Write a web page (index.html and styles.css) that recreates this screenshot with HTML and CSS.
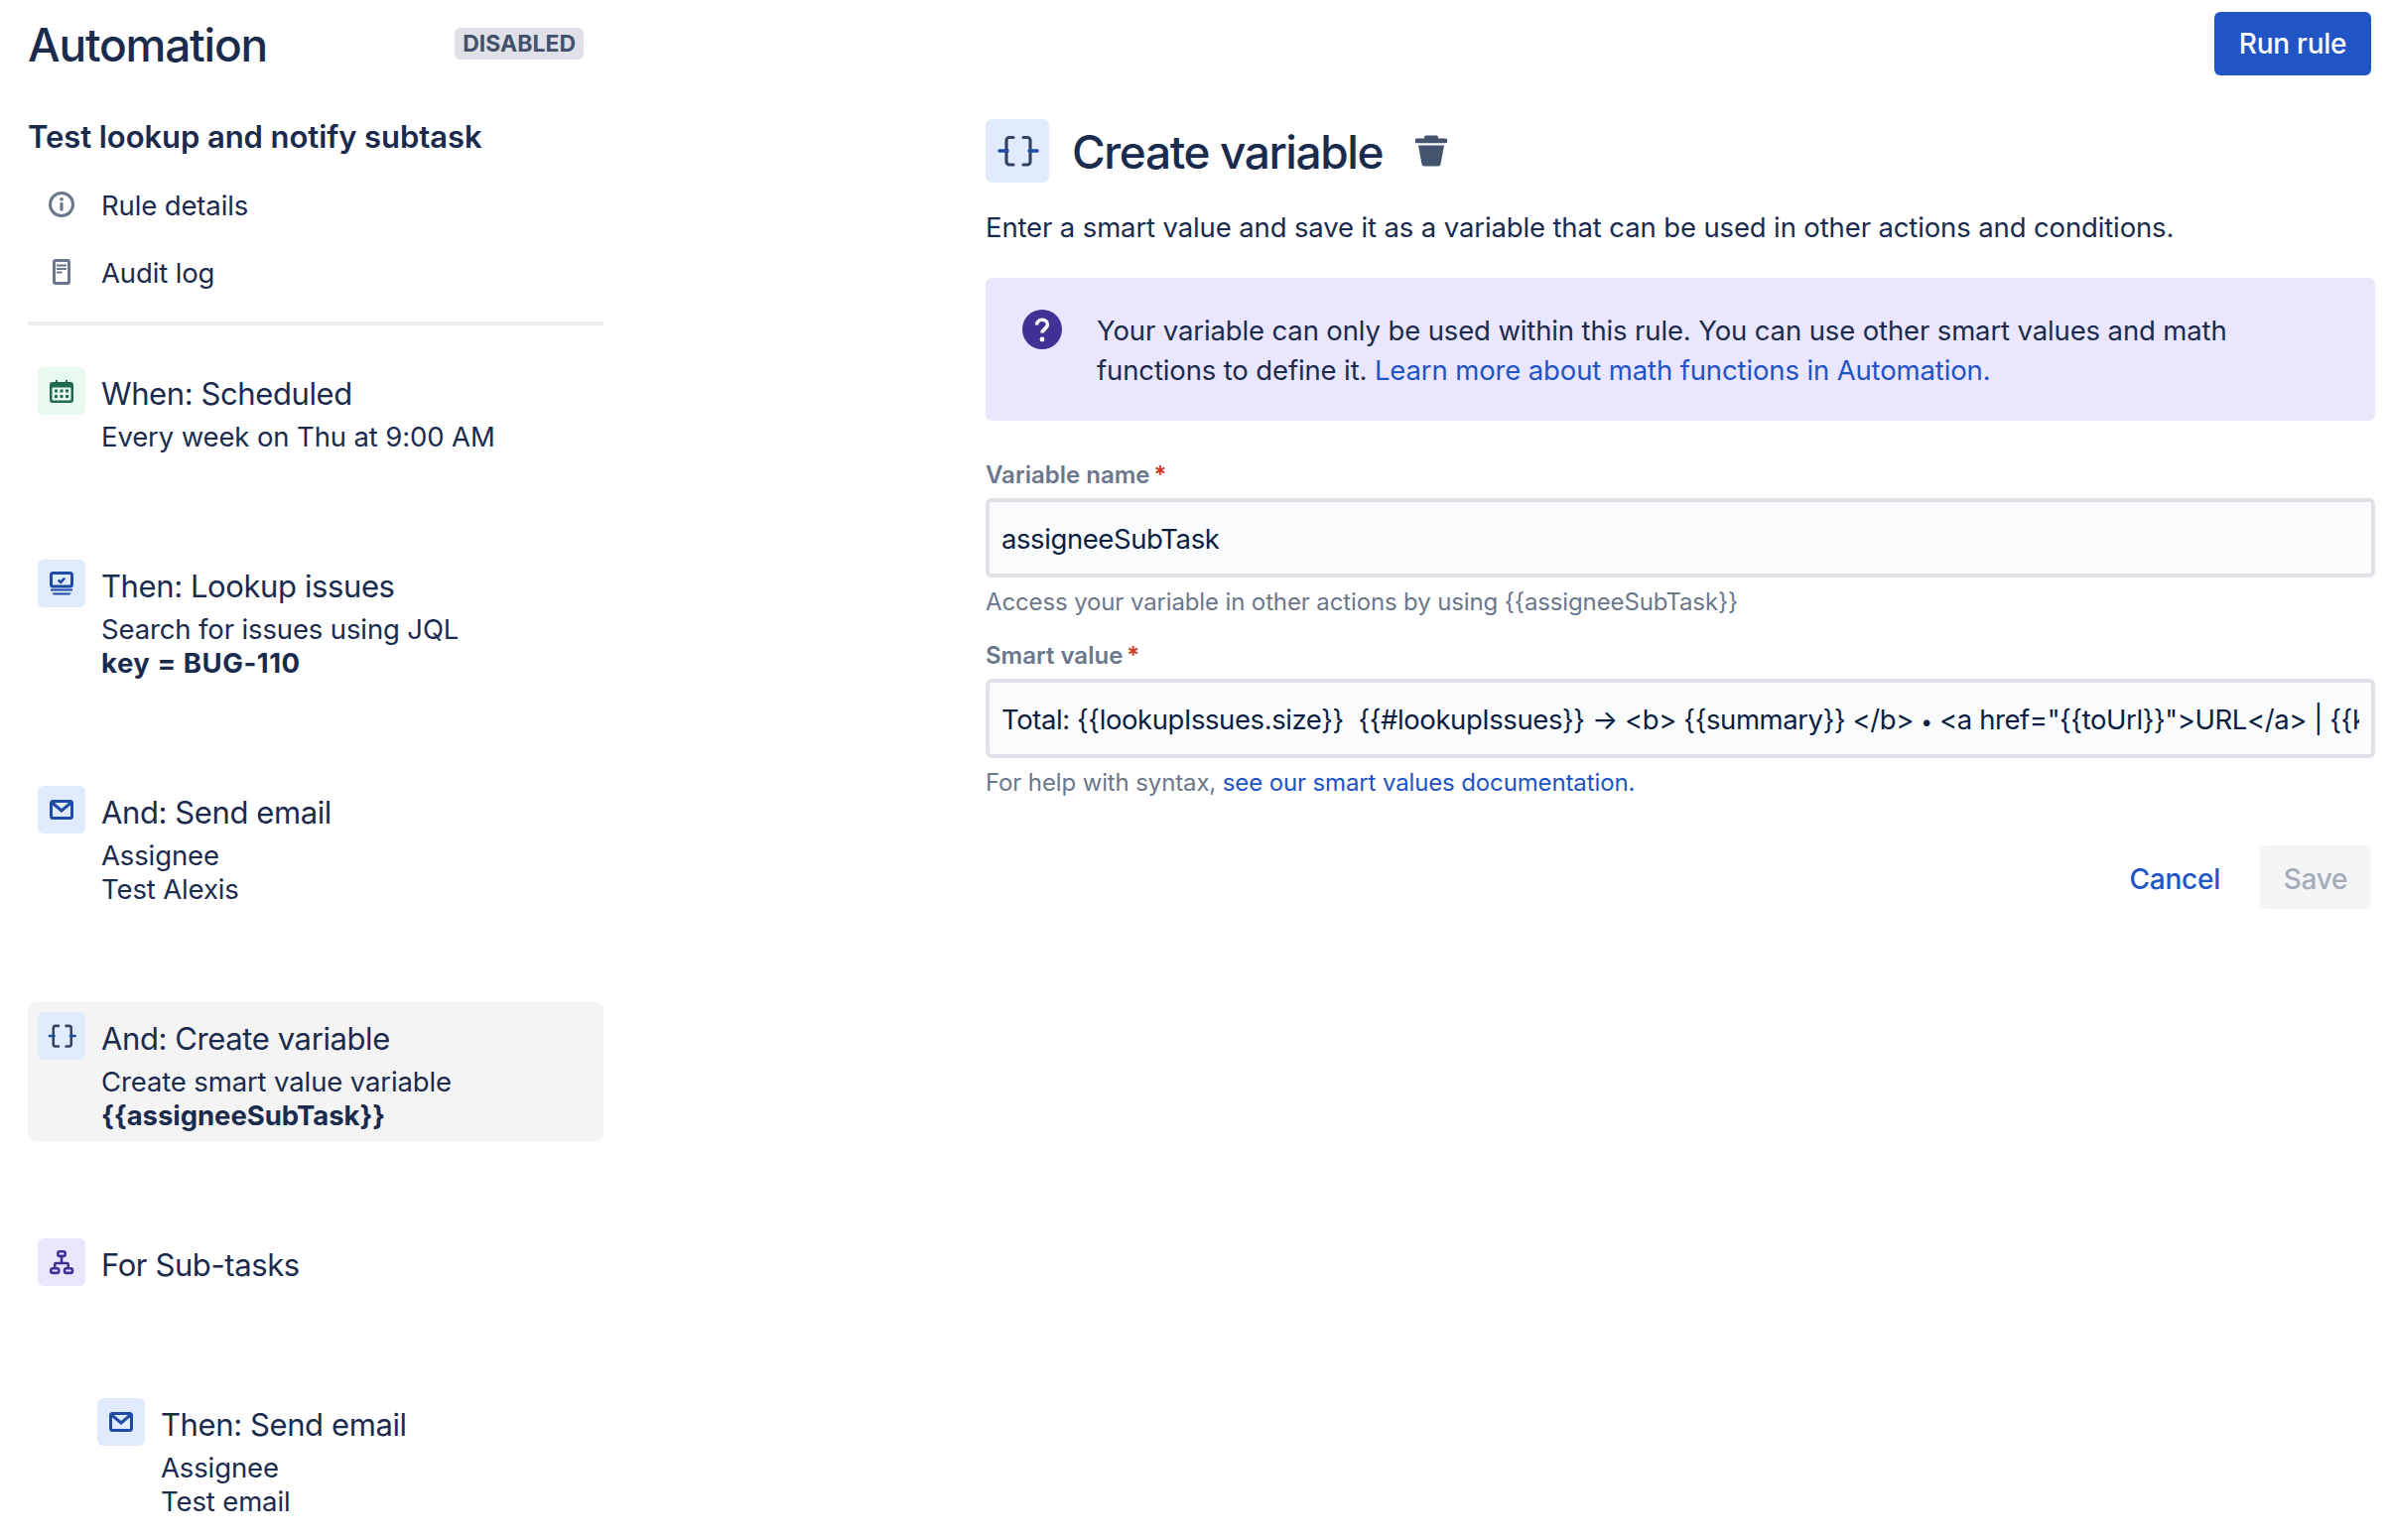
FILE: index.html
```html
<!DOCTYPE html>
<html lang="en">
<head>
<meta charset="utf-8">
<title>Automation</title>
<link rel="stylesheet" href="styles.css">
</head>
<body>
<div class="page">
  <aside class="rail">
    <header class="rail-head">
      <h1 class="app-title">Automation</h1>
      <span class="badge">DISABLED</span>
    </header>
    <h2 class="rule-name">Test lookup and notify subtask</h2>
    <nav class="rail-nav">
      <a class="nav-item">
        <span class="nav-icon"><svg width="28" height="28" viewBox="0 0 28 28"><circle cx="14" cy="14" r="11.5" fill="none" stroke="#6B778C" stroke-width="3"/><rect x="12.4" y="12" width="3.2" height="8.5" rx="1" fill="#6B778C"/><circle cx="14" cy="8.8" r="1.9" fill="#6B778C"/></svg></span>
        <span>Rule details</span>
      </a>
      <a class="nav-item">
        <span class="nav-icon"><svg width="28" height="28" viewBox="0 0 28 28"><rect x="6.5" y="2.5" width="15" height="23" rx="1.5" fill="none" stroke="#6B778C" stroke-width="3"/><path d="M9 6.5h10v2H9zM9 10h10v2H9zM9 13.5h5.5v2H9z" fill="#6B778C"/></svg></span>
        <span>Audit log</span>
      </a>
    </nav>
    <hr class="divider">
    <ol class="steps">
      <li class="step">
        <span class="tile tile-green"><svg class="ico" viewBox="0 0 48 48"><path d="M15 15h3v-2h2v2h8v-2h2v2h3a3 3 0 0 1 3 3v15a3 3 0 0 1-3 3H15a3 3 0 0 1-3-3V18a3 3 0 0 1 3-3z" fill="#216A4B"/><rect x="14.5" y="20.5" width="19" height="13" rx="1" fill="#E8FAF0"/><g fill="#216A4B"><rect x="17" y="22.5" width="3" height="3"/><rect x="22.5" y="22.5" width="3" height="3"/><rect x="28" y="22.5" width="3" height="3"/><rect x="17" y="28" width="3" height="3"/><rect x="22.5" y="28" width="3" height="3"/><rect x="28" y="28" width="3" height="3"/></g></svg></span>
        <div class="step-body">
          <div class="step-title">When: Scheduled</div>
          <div class="step-sub">Every week on Thu at 9:00 AM</div>
        </div>
      </li>
      <li class="step">
        <span class="tile tile-blue"><svg class="ico" viewBox="0 0 48 48"><rect x="13.5" y="13.5" width="21" height="13.5" rx="2" fill="none" stroke="#1D4BA6" stroke-width="3"/><path d="M20.8 20.5l2.4 2.4 4-4.4" fill="none" stroke="#1D4BA6" stroke-width="2.5"/><path d="M13 29.5h22v2H13z" fill="#1D4BA6"/><path d="M14.5 33.5h19l-1 1.6a1.5 1.5 0 0 1-1 .4h-15a1.5 1.5 0 0 1-1-.4z" fill="#1D4BA6"/></svg></span>
        <div class="step-body">
          <div class="step-title">Then: Lookup issues</div>
          <div class="step-sub">Search for issues using JQL<br><b class="key">key = BUG-110</b></div>
        </div>
      </li>
      <li class="step">
        <span class="tile tile-blue"><svg class="ico" viewBox="0 0 48 48"><rect x="13.5" y="15.5" width="21" height="17" rx="2" fill="none" stroke="#1D4BA6" stroke-width="3"/><path d="M14.5 17l9.5 8 9.5-8" fill="none" stroke="#1D4BA6" stroke-width="3"/></svg></span>
        <div class="step-body">
          <div class="step-title">And: Send email</div>
          <div class="step-sub">Assignee<br>Test Alexis</div>
        </div>
      </li>
      <li class="step step-active">
        <span class="tile tile-blue"><svg class="ico" viewBox="0 0 64 64"><path d="M28 18.5h-4a3 3 0 0 0-3 3V43a3 3 0 0 0 3 3h4M38 18.5h4a3 3 0 0 1 3 3V43a3 3 0 0 1-3 3h-4" fill="none" stroke="#344563" stroke-width="3.4" stroke-linecap="round"/><path d="M16 32h6M44 32h6" fill="none" stroke="#1D4BA6" stroke-width="3.6" stroke-linecap="round"/></svg></span>
        <div class="step-body">
          <div class="step-title">And: Create variable</div>
          <div class="step-sub">Create smart value variable<br><b>{{assigneeSubTask}}</b></div>
        </div>
      </li>
      <li class="step">
        <span class="tile tile-purple"><svg class="ico" viewBox="0 0 48 48"><g fill="none" stroke="#403294" stroke-width="2.6"><rect x="20.3" y="13.3" width="7.4" height="4.6" rx="2"/><rect x="13.3" y="30.3" width="8" height="4.6" rx="2"/><rect x="27" y="30.3" width="8" height="4.6" rx="2"/><path d="M24 18v7M17.3 30v-4a1 1 0 0 1 1-1h11.4a1 1 0 0 1 1 1v4"/></g></svg></span>
        <div class="step-body">
          <div class="step-title">For Sub-tasks</div>
        </div>
      </li>
      <li class="step step-nested">
        <span class="tile tile-blue"><svg class="ico" viewBox="0 0 48 48"><rect x="13.5" y="15.5" width="21" height="17" rx="2" fill="none" stroke="#1D4BA6" stroke-width="3"/><path d="M14.5 17l9.5 8 9.5-8" fill="none" stroke="#1D4BA6" stroke-width="3"/></svg></span>
        <div class="step-body">
          <div class="step-title">Then: Send email</div>
          <div class="step-sub">Assignee<br>Test email</div>
        </div>
      </li>
    </ol>
  </aside>

  <main class="detail">
    <div class="topbar"><button class="btn btn-primary">Run rule</button></div>
    <div class="detail-head">
      <span class="tile tile-large tile-blue"><svg class="ico" viewBox="0 0 64 64"><path d="M28 18.5h-4a3 3 0 0 0-3 3V43a3 3 0 0 0 3 3h4M38 18.5h4a3 3 0 0 1 3 3V43a3 3 0 0 1-3 3h-4" fill="none" stroke="#344563" stroke-width="3.2" stroke-linecap="round"/><path d="M14 32h8M44 32h8" fill="none" stroke="#1D4BA6" stroke-width="3.4" stroke-linecap="round"/></svg></span>
      <h2 class="detail-title">Create variable</h2>
      <svg class="trash" width="32" height="32" viewBox="0 0 32 32"><path d="M11 0.5h10a2 2 0 0 1 2 2V3.4h7.2a1.8 1.8 0 0 1 0 4.8H1.8a1.8 1.8 0 0 1 0-4.8H9V2.5a2 2 0 0 1 2-2z" fill="#44546F"/><path d="M3 10.6h26L25.6 29a3 3 0 0 1-3 2.6H9.4a3 3 0 0 1-3-2.6z" fill="#44546F"/></svg>
    </div>
    <p class="lede">Enter a smart value and save it as a variable that can be used in other actions and conditions.</p>
    <section class="notice">
      <svg class="notice-icon" width="40" height="40" viewBox="0 0 40 40"><circle cx="20" cy="20" r="20" fill="#403294"/><path d="M14.6 15.6c0-3.2 2.4-5.4 5.4-5.4s5.4 2.1 5.4 5c0 4.2-5.4 4.4-5.4 8.4" fill="none" stroke="#fff" stroke-width="3.6"/><circle cx="20" cy="30" r="2.4" fill="#fff"/></svg>
      <p class="notice-text">Your variable can only be used within this rule. You can use other smart values and math<br>functions to define it. <a class="link">Learn more about math functions in Automation.</a></p>
    </section>
    <form class="form">
      <div class="field">
        <div class="label">Variable name<span class="req">*</span></div>
        <div class="input"><div class="input-text">assigneeSubTask</div></div>
        <div class="help">Access your variable in other actions by using {{assigneeSubTask}}</div>
      </div>
      <div class="field">
        <div class="label">Smart value<span class="req">*</span></div>
        <div class="input"><div class="input-text">Total: {{lookupIssues.size}}  {{#lookupIssues}} → &lt;b&gt; {{summary}} &lt;/b&gt; <span class="dot">•</span> &lt;a href="{{toUrl}}"&gt;URL&lt;/a&gt; | {{key}} {{/lookupIssues}}</div></div>
        <div class="help">For help with syntax, <a class="link">see our smart values documentation.</a></div>
      </div>
      <div class="actions">
        <button type="button" class="btn btn-link">Cancel</button>
        <button type="button" class="btn btn-disabled">Save</button>
      </div>
    </form>
  </main>
</div>
</body>
</html>
```
FILE: styles.css
```css
* { box-sizing: border-box; }
html, body { margin: 0; padding: 0; height: 100%; background: #fff; overflow: hidden; }
body { font-family: Inter, "Liberation Sans", sans-serif; color: #1b2b4e; font-size: 27.5px; letter-spacing: -0.13px; line-height: 40px; }
.page { display: flex; width: 2408px; height: 1552px; overflow: hidden; }

.rail { width: 580px; margin-left: 28px; flex: none; padding-top: 12px; }
.rail-head { display: flex; align-items: center; justify-content: space-between; height: 64px; padding-right: 20px; }
.app-title { margin: 0; padding-top: 2px; font-size: 46px; line-height: 62px; font-weight: 500; letter-spacing: -1.2px; }
.badge { height: 32px; padding: 0 8px; background: #DFE1E6; border-radius: 6px; color: #42526E; font-size: 23px; line-height: 32px; font-weight: 700; letter-spacing: 0; }
.rule-name { margin: 41.5px 0 14.5px; font-size: 31px; line-height: 40px; font-weight: 600; letter-spacing: -0.07px; }
.rail-nav { display: flex; flex-direction: column; }
.nav-item { display: flex; align-items: center; height: 68px; padding: 2px 0 0 20px; gap: 26px; }
.nav-icon { display: flex; width: 28px; height: 28px; margin-top: -2px; }
.divider { height: 4px; margin: 16px 0 32px; border: 0; background: #EBECF0; }

.steps { list-style: none; margin: 0; padding: 0; }
.step { display: flex; gap: 16px; padding: 10px; margin-bottom: 88px; border-radius: 8px; }
.step-active { background: #F4F4F5; }
.step-nested { margin-left: 60px; }
.tile { display: flex; flex: none; width: 48px; height: 48px; border-radius: 6px; }
.tile-large { width: 64px; height: 64px; }
.tile-green { background: #E8FAF0; }
.tile-blue { background: #E0EBFD; }
.tile-purple { background: #EAE6FD; }
.ico { width: 100%; height: 100%; }
.step-body { padding-top: 7px; }
.step-title { font-size: 31px; line-height: 40px; letter-spacing: -0.4px; margin-bottom: 6px; }
.step-sub { font-size: 27.5px; line-height: 34px; margin-bottom: -1px; }
.step-sub b { font-weight: 700; letter-spacing: -0.05px; }
.step-sub .key { letter-spacing: 0.55px; }

.detail { width: 1400px; margin-left: 385px; flex: none; padding-top: 12px; }
.topbar { display: flex; justify-content: flex-end; padding-right: 4px; margin-bottom: 44px; }
.btn { height: 64px; padding: 0 24px; border: 0; border-radius: 6px; background: none; font: 500 28px/64px Inter, "Liberation Sans", sans-serif; letter-spacing: -0.25px; }
.btn-primary { width: 158px; padding: 0; background: #2154C4; color: #fff; }
.btn-link { padding-top: 2px; color: #2154C4; }
.btn-disabled { width: 112px; padding: 2px 0 0; background: #F4F5F6; color: #A5ADBA; }
.detail-head { display: flex; align-items: center; }
.detail-title { margin: 0 33px 0 23px; padding-top: 2px; font-size: 46px; line-height: 62px; font-weight: 500; letter-spacing: -1.4px; }
.trash { flex: none; }
.lede { margin: 24.5px 0 31.5px; }
.notice { display: flex; gap: 35px; padding: 32px 37px; background: #EAE6FD; border-radius: 6px; }
.notice-icon { flex: none; }
.notice-text { margin: 0.5px 0 -0.5px; }
.link { color: #2154C4; }

.form { margin-top: 38px; }
.field { margin-bottom: 22px; }
.label { height: 32px; margin-bottom: 8px; font-size: 24px; line-height: 34px; font-weight: 600; color: #6B778C; letter-spacing: 0; }
.req { color: #CE3A1F; margin-left: 4px; }
.input { height: 80px; padding: 0 12px; border: 4px solid #DFE1E6; border-radius: 6px; background: #FAFBFD; }
.input-text { height: 72px; overflow: hidden; white-space: pre; font-size: 27.5px; line-height: 74px; letter-spacing: -0.42px; color: #0B1E42; }
.dot { font-size: 21px; }
.help { height: 32px; margin-top: 8px; font-size: 24px; line-height: 34px; letter-spacing: -0.13px; color: #6B778C; }
.actions { display: flex; justify-content: flex-end; gap: 16px; padding-right: 4px; margin-top: 48px; }
```
